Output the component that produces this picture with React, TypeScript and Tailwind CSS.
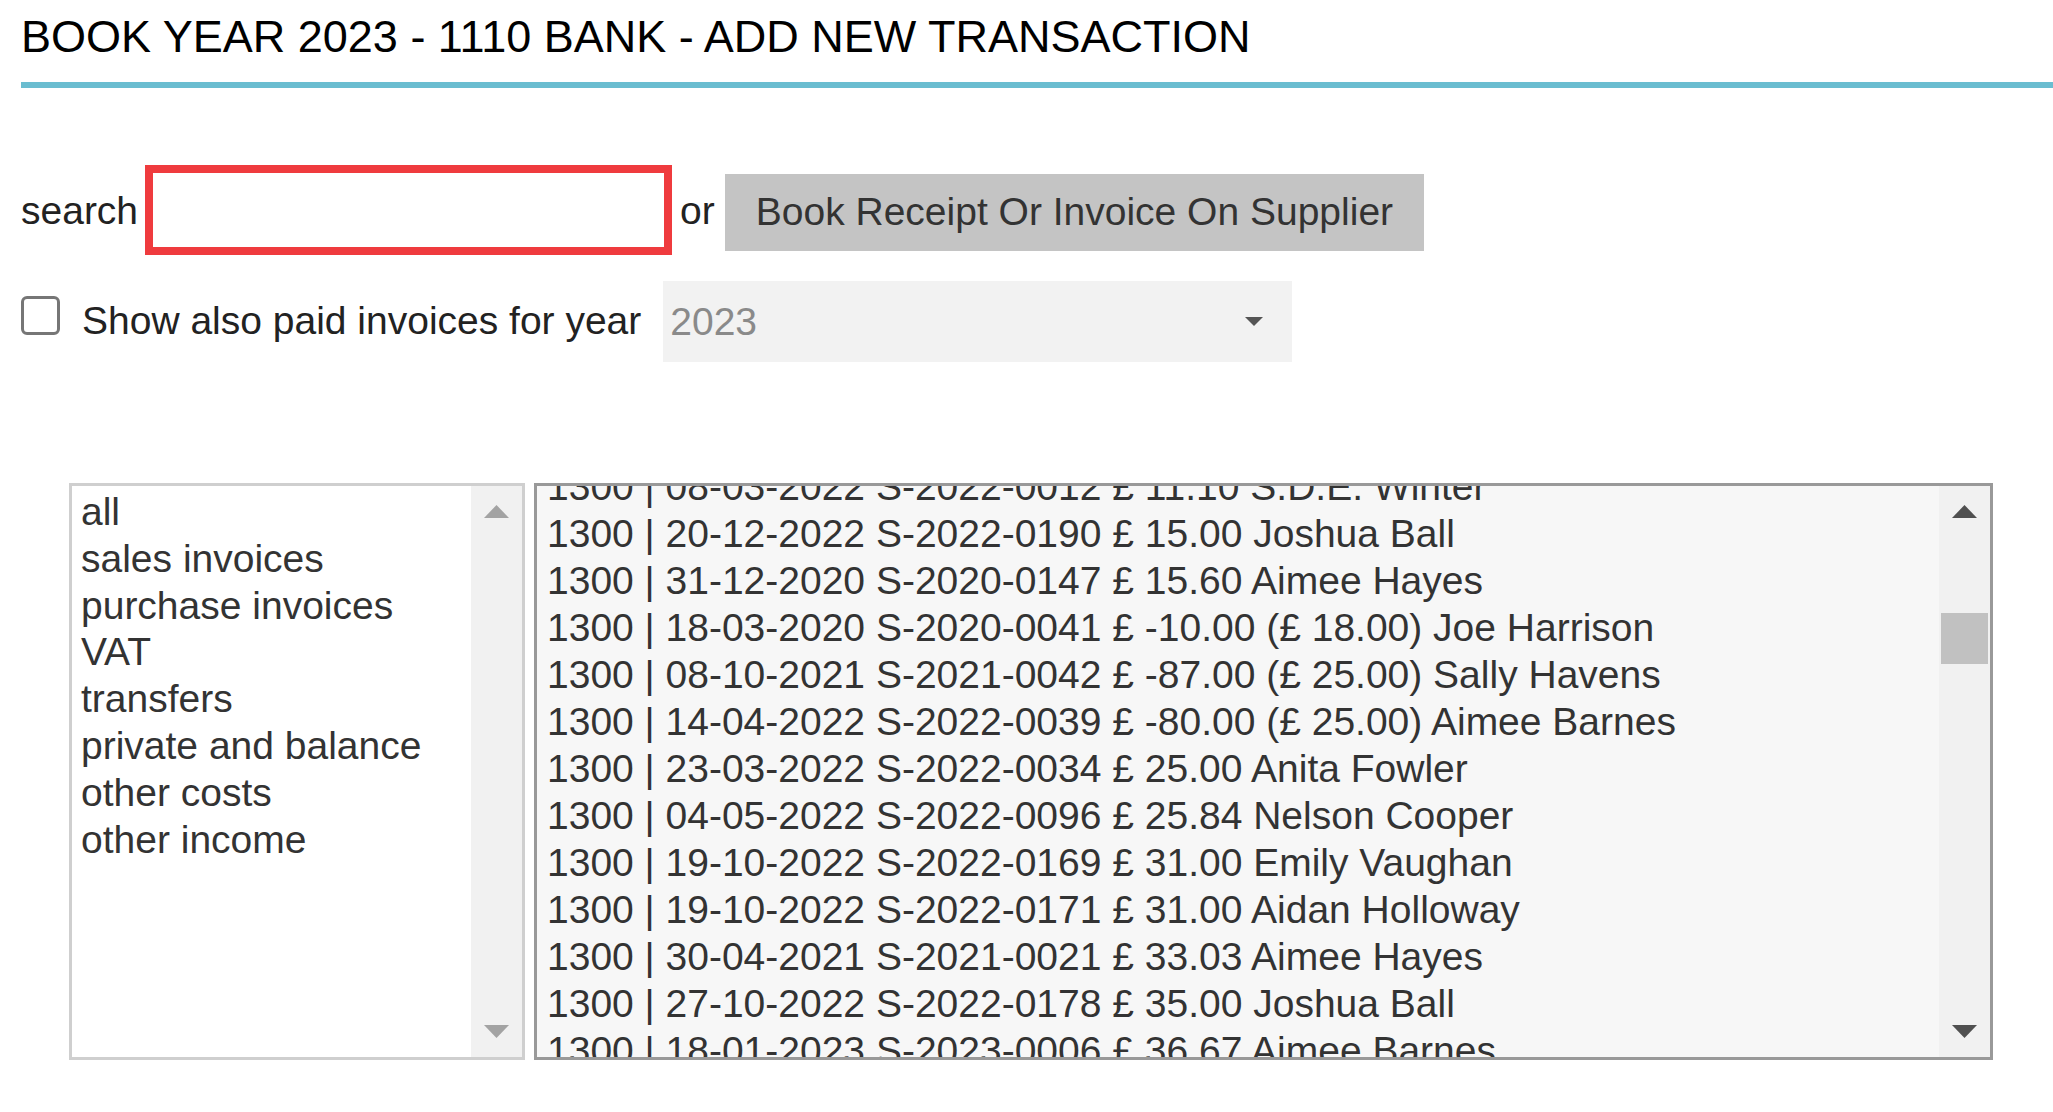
import React from "react";

const categories = [
  "all",
  "sales invoices",
  "purchase invoices",
  "VAT",
  "transfers",
  "private and balance",
  "other costs",
  "other income",
];

const transactions = [
  "1300 | 08-03-2022 S-2022-0012 £ 11.10 S.D.E. Winter",
  "1300 | 20-12-2022 S-2022-0190 £ 15.00 Joshua Ball",
  "1300 | 31-12-2020 S-2020-0147 £ 15.60 Aimee Hayes",
  "1300 | 18-03-2020 S-2020-0041 £ -10.00 (£ 18.00) Joe Harrison",
  "1300 | 08-10-2021 S-2021-0042 £ -87.00 (£ 25.00) Sally Havens",
  "1300 | 14-04-2022 S-2022-0039 £ -80.00 (£ 25.00) Aimee Barnes",
  "1300 | 23-03-2022 S-2022-0034 £ 25.00 Anita Fowler",
  "1300 | 04-05-2022 S-2022-0096 £ 25.84 Nelson Cooper",
  "1300 | 19-10-2022 S-2022-0169 £ 31.00 Emily Vaughan",
  "1300 | 19-10-2022 S-2022-0171 £ 31.00 Aidan Holloway",
  "1300 | 30-04-2021 S-2021-0021 £ 33.03 Aimee Hayes",
  "1300 | 27-10-2022 S-2022-0178 £ 35.00 Joshua Ball",
  "1300 | 18-01-2023 S-2023-0006 £ 36.67 Aimee Barnes",
];

function Arrow({ up, color }: { up: boolean; color: string }) {
  return (
    <svg width="25" height="13" viewBox="0 0 25 13">
      <polygon points={up ? "12.5,0 25,13 0,13" : "0,0 25,0 12.5,13"} fill={color} />
    </svg>
  );
}

function Scrollbar({ active }: { active: boolean }) {
  const color = active ? "#505050" : "#a3a3a3";
  return (
    <div className="flex w-[51px] shrink-0 flex-col bg-[#f1f1f1]">
      <div className="flex h-[51px] items-center justify-center">
        <Arrow up color={color} />
      </div>
      <div className="flex-1">
        {active && <div className="mx-[2px] mt-[76px] h-[51px] bg-[#c1c1c1]" />}
      </div>
      <div className="flex h-[51px] items-center justify-center">
        <Arrow up={false} color={color} />
      </div>
    </div>
  );
}

export default function App() {
  return (
    <div className="min-h-screen bg-white font-['Liberation_Sans',Arial,sans-serif] text-[39px] text-[#222]">
      <div className="pl-[21px]">
        <h1 className="border-b-[6px] border-[#6abdd0] pb-[20px] pt-[11px] text-[45px] font-normal leading-[51px] text-black">
          BOOK YEAR 2023 - 1110 BANK - ADD NEW TRANSACTION
        </h1>

        <div className="mt-[77px] flex items-center leading-[45px]">
          <span className="mr-[7px]">search</span>
          <input
            type="text"
            className="h-[90px] w-[527px] border-[8px] border-[#ef3b3e] bg-white outline-none"
          />
          <span className="ml-[8px] mr-[10px]">or</span>
          <button className="mt-[5px] h-[77px] bg-[#c4c4c4] px-[31px] pb-[3px] text-[39px] leading-[45px] text-[#333]">
            Book Receipt Or Invoice On Supplier
          </button>
        </div>

        <div className="mt-[26px] flex items-start leading-[45px]">
          <div className="mt-[15px] h-[39px] w-[39px] shrink-0 rounded-[6px] border-[3px] border-[#767676] bg-white" />
          <span className="ml-[22px] mr-[22px] mt-[17px]">Show also paid invoices for year</span>
          <div className="flex h-[81px] w-[629px] items-center justify-between bg-[#f2f2f2] pl-[7px] pr-[29px] text-[#8a8a8a]">
            <span>2023</span>
            <svg width="18" height="9" viewBox="0 0 18 9">
              <polygon points="0,0 18,0 9,9" fill="#555" />
            </svg>
          </div>
        </div>

        <div className="ml-[48px] mt-[121px] flex gap-[9px] text-[#333]">
          <div className="flex h-[577px] w-[456px] border-[3px] border-[#cfcfcf] bg-white">
            <div className="flex-1 overflow-hidden pt-[3px]">
              {categories.map((c) => (
                <div key={c} className="h-[46.8px] whitespace-nowrap pl-[9px] leading-[46.8px]">
                  {c}
                </div>
              ))}
            </div>
            <Scrollbar active={false} />
          </div>

          <div className="flex h-[577px] w-[1459px] border-[3px] border-[#999] bg-[#f7f7f7]">
            <div className="flex-1 overflow-hidden">
              <div className="-mt-[23px]">
                {transactions.map((t, i) => (
                  <div key={i} className="h-[47px] whitespace-nowrap pl-[10px] leading-[47px]">
                    {t}
                  </div>
                ))}
              </div>
            </div>
            <Scrollbar active />
          </div>
        </div>
      </div>
    </div>
  );
}
